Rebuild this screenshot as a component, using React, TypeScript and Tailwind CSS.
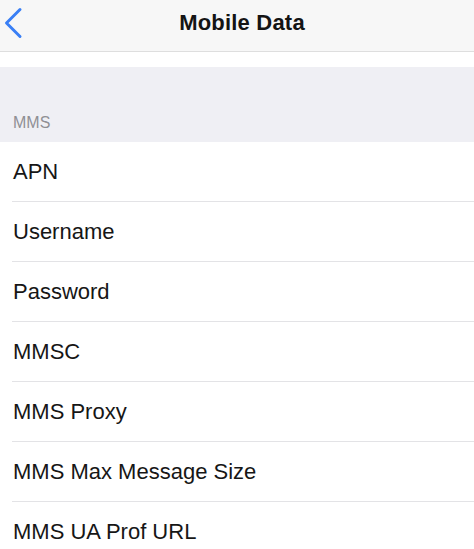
import React from "react";

const rows = [
  "APN",
  "Username",
  "Password",
  "MMSC",
  "MMS Proxy",
  "MMS Max Message Size",
  "MMS UA Prof URL",
];

export default function App() {
  return (
    <div
      className="w-[474px] h-[549px] overflow-hidden bg-white"
      style={{ fontFamily: '"Liberation Sans", Arial, sans-serif' }}
    >
      {/* nav bar */}
      <div className="relative h-[52px] bg-[#f7f7f7] border-b border-[#dedede] flex items-center justify-center">
        <svg
          className="absolute left-[3px] top-[7px]"
          width="20"
          height="34"
          viewBox="0 0 20 34"
          fill="none"
        >
          <path
            d="M17 2.5 L3.5 16 L17 29.5"
            stroke="#3a7ff5"
            strokeWidth="3"
            strokeLinecap="round"
            strokeLinejoin="round"
          />
        </svg>
        <span className="pl-[10px] pb-[6px] text-[22px] font-bold text-[#141414] tracking-[0.2px]">
          Mobile Data
        </span>
      </div>

      <div className="h-[15px] bg-white" />

      {/* section header */}
      <div className="h-[75px] bg-[#efeff4] flex items-end pl-[13px] pb-[11px]">
        <span className="text-[16px] text-[#8f8f94] leading-none">MMS</span>
      </div>

      {/* rows */}
      <div className="bg-white">
        {rows.map((label, i) => (
          <div key={label} className="pl-[12px]">
            <div
              className={
                "h-[60px] flex items-center pl-[1px] pb-[1px] " +
                (i < rows.length - 1 ? "border-b border-[#e3e3e6]" : "")
              }
            >
              <span className="text-[22px] text-[#161616]">{label}</span>
            </div>
          </div>
        ))}
      </div>
    </div>
  );
}
